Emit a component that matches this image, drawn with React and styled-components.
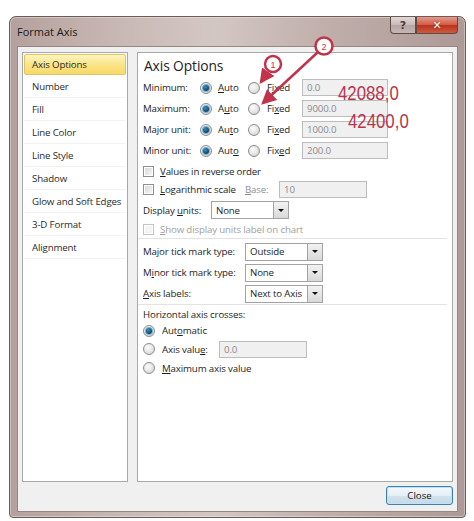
import React from "react";
import styled, { createGlobalStyle } from "styled-components";

const GlobalStyle = createGlobalStyle`
  html, body {
    margin: 0;
    padding: 0;
    background: #fff;
  }
  body {
    font-family: "Open Sans", "Noto Sans", sans-serif;
    color: #1e1e1e;
  }
`;

const Page = styled.div`
  position: relative;
  width: 474px;
  height: 521px;
  padding: 16px 0 0 9px;
  box-sizing: border-box;
`;

const Window = styled.div`
  width: 457px;
  height: 502px;
  box-sizing: border-box;
  border: 1px solid #6c5c59;
  border-radius: 7px 7px 4px 4px;
  background: linear-gradient(
    90deg,
    #b4a19d 0%,
    #c9b9b5 25%,
    #d3c7c4 45%,
    #c0aeaa 70%,
    #ad9a96 100%
  );
  box-shadow: inset 0 0 0 1px rgba(255, 255, 255, 0.35);
  padding: 0 7px 5px 7px;
  display: flex;
  flex-direction: column;
`;

const TitleBar = styled.div`
  height: 29px;
  display: flex;
  align-items: flex-start;
  justify-content: space-between;
`;

const Title = styled.div`
  font-size: 11px;
  color: #1a1a1a;
  padding-top: 7px;
`;

const Caption = styled.div`
  display: flex;
`;

const CapButton = styled.div`
  height: 17px;
  width: ${(p) => p.w}px;
  box-sizing: border-box;
  border: 1px solid #5e4a47;
  border-top: none;
  display: flex;
  align-items: center;
  justify-content: center;
  font-family: "DejaVu Sans", sans-serif;
  font-weight: bold;
  font-size: 11px;
  color: ${(p) => (p.red ? "#fff" : "#4a3c3a")};
  background: ${(p) =>
    p.red
      ? "linear-gradient(#e49a88, #d05a45 50%, #b9321e 51%, #cf5a3c)"
      : "linear-gradient(#e3d9d7, #c8b9b6 50%, #b6a4a1 51%, #c6b7b4)"};
  border-radius: ${(p) => (p.red ? "0 0 4px 0" : "0 0 0 4px")};
  text-shadow: ${(p) => (p.red ? "0 0 2px #7a1a10" : "none")};
`;

const Client = styled.div`
  flex: 1;
  background: #f0f0f0;
  border: 1px solid #988683;
  padding: 5px 4px 6px 4px;
  display: flex;
  flex-direction: column;
`;

const Body = styled.div`
  flex: 1;
  display: flex;
  gap: 9px;
`;

const Nav = styled.div`
  width: 106px;
  box-sizing: border-box;
  border: 1px solid #a9a9a9;
  background: #fff;
  padding: 0 1px;
`;

const NavItem = styled.div`
  box-sizing: border-box;
  display: flex;
  align-items: center;
  padding-left: 7px;
  font-size: 9.7px;
  letter-spacing: -0.15px;
  white-space: nowrap;
  color: #2a2a2a;
  border: 1px solid ${(p) => (p.active ? "#e3c263" : "transparent")};
  border-bottom-color: ${(p) => (p.active ? "#e3c263" : "#f1f1f1")};
  border-radius: ${(p) => (p.active ? "2px" : "0")};
  background: ${(p) =>
    p.active ? "linear-gradient(#fdf5c2, #fbe588 50%, #f8d968)" : "#fff"};
  margin-top: ${(p) => (p.active ? "1px" : "0")};
  height: ${(p) => (p.active ? "21px" : "23px")};
`;

const Content = styled.div`
  flex: 1;
  box-sizing: border-box;
  border: 1px solid #a9a9a9;
  background: #fff;
  padding: 2px 0 0 5px;
  display: flex;
  flex-direction: column;
  font-size: 9.7px;
  letter-spacing: -0.15px;
`;

const Heading = styled.div`
  font-size: 13.8px;
  letter-spacing: -0.1px;
  height: 22px;
  line-height: 22px;
  color: #222;
  padding-left: 1px;
`;

const Row = styled.div`
  display: flex;
  align-items: center;
  white-space: nowrap;
  height: ${(p) => p.h || 21}px;
  margin-top: ${(p) => p.mt || 0}px;
  color: ${(p) => (p.disabled ? "#a0a0a0" : "#1e1e1e")};
`;

const Label = styled.span`
  width: ${(p) => p.w}px;
  flex-shrink: 0;
  color: ${(p) => (p.disabled ? "#8f8f8f" : "inherit")};
`;

const U = styled.span`
  text-decoration: underline;
`;

const Option = styled.label`
  display: flex;
  align-items: center;
  gap: ${(p) => p.gap || 6}px;
  width: ${(p) => (p.w ? `${p.w}px` : "auto")};
  flex-shrink: 0;
`;

const Radio = styled.span`
  width: 12px;
  height: 12px;
  box-sizing: border-box;
  border-radius: 50%;
  border: 1px solid #8d8d8d;
  background: radial-gradient(circle at 40% 35%, #fdfdfd, #d8d8d8 80%);
  display: flex;
  align-items: center;
  justify-content: center;
  flex-shrink: 0;
  &::after {
    content: "";
    display: ${(p) => (p.checked ? "block" : "none")};
    width: 6px;
    height: 6px;
    border-radius: 50%;
    background: radial-gradient(circle at 40% 35%, #3f8fbd, #0b3f60 70%);
    box-shadow: 0 0 0 1px #6fb2d8;
  }
`;

const Check = styled.span`
  width: 11px;
  height: 11px;
  box-sizing: border-box;
  border: 1px solid ${(p) => (p.disabled ? "#c4c4c4" : "#8e8e8e")};
  background: ${(p) =>
    p.disabled ? "#f4f4f4" : "linear-gradient(135deg, #d6d6d6, #f8f8f8)"};
  box-shadow: inset 0 0 0 1px #fff;
  flex-shrink: 0;
`;

const TextBox = styled.div`
  width: ${(p) => p.w}px;
  height: 17px;
  box-sizing: border-box;
  border: 1px solid #bdbdbd;
  background: #f0f0f0;
  color: #8c8c8c;
  padding-left: 4px;
  display: flex;
  align-items: center;
  flex-shrink: 0;
`;

const Select = styled.div`
  width: ${(p) => p.w}px;
  height: 18px;
  box-sizing: border-box;
  border: 1px solid #a3a3a3;
  background: #fff;
  display: flex;
  align-items: stretch;
  flex-shrink: 0;
`;

const SelectText = styled.span`
  flex: 1;
  display: flex;
  align-items: center;
  padding-left: 4px;
  white-space: nowrap;
  overflow: hidden;
`;

const DropButton = styled.span`
  width: 15px;
  box-sizing: border-box;
  border-left: 1px solid #a3a3a3;
  background: linear-gradient(#f2f2f2, #d9d9d9);
  display: flex;
  align-items: center;
  justify-content: center;
  &::after {
    content: "";
    border-left: 3px solid transparent;
    border-right: 3px solid transparent;
    border-top: 3px solid #111;
  }
`;

const Divider = styled.div`
  height: 1px;
  background: #e3e3e3;
  margin: ${(p) => p.m || "0 5px 2px -5px"};
`;

const Footer = styled.div`
  display: flex;
  justify-content: flex-end;
  margin-top: 4px;
`;

const CloseButton = styled.button`
  width: 67px;
  height: 19px;
  box-sizing: border-box;
  border: 1px solid #3c7fb1;
  border-radius: 3px;
  background: linear-gradient(#f4f9fc, #e5eef5 50%, #d3e3ee 51%, #c6d9e6);
  box-shadow: inset 0 0 0 1px #bfe2f5;
  font-family: "Open Sans", "Noto Sans", sans-serif;
  font-size: 9.7px;
  color: #1a1a1a;
  padding: 0;
`;

const Overlay = styled.svg`
  position: absolute;
  left: 0;
  top: 0;
  pointer-events: none;
`;

const Note = styled.div`
  position: absolute;
  left: ${(p) => p.x}px;
  top: ${(p) => p.y}px;
  font-family: "Liberation Sans", sans-serif;
  font-size: 21px;
  line-height: 1;
  color: #b8354d;
  transform: scaleX(0.8);
  transform-origin: left top;
  white-space: nowrap;
`;

const navItems = [
  "Axis Options",
  "Number",
  "Fill",
  "Line Color",
  "Line Style",
  "Shadow",
  "Glow and Soft Edges",
  "3-D Format",
  "Alignment",
];

const bounds = [
  { label: "Minimum:", auto: [0, "Auto"], fixed: [1, "Fixed"], value: "0.0" },
  { label: "Maximum:", auto: [1, "Auto"], fixed: [2, "Fixed"], value: "9000.0" },
  { label: "Major unit:", auto: [2, "Auto"], fixed: [2, "Fixed"], value: "1000.0" },
  { label: "Minor unit:", auto: [3, "Auto"], fixed: [3, "Fixed"], value: "200.0" },
];

const mnemonic = ([i, word]) => (
  <>
    {word.slice(0, i)}
    <U>{word[i]}</U>
    {word.slice(i + 1)}
  </>
);

const Annotations = () => (
  <Overlay width="474" height="521" viewBox="0 0 474 521">
    <defs>
      <marker
        id="head"
        markerWidth="6"
        markerHeight="6"
        refX="5"
        refY="3"
        orient="auto"
        markerUnits="strokeWidth"
      >
        <path d="M0,0 L6,3 L0,6 Z" fill="#c0334b" />
      </marker>
    </defs>
    <line x1="268" y1="72" x2="261" y2="82" stroke="#c0334b" strokeWidth="2.5" markerEnd="url(#head)" />
    <line x1="318" y1="52" x2="263" y2="103" stroke="#c0334b" strokeWidth="2.5" markerEnd="url(#head)" />
    <circle cx="273" cy="64" r="8" fill="#fff" stroke="#c0334b" strokeWidth="2.5" />
    <text x="273" y="67.5" textAnchor="middle" fontSize="9" fill="#c0334b" fontFamily="Liberation Sans, sans-serif">1</text>
    <circle cx="324" cy="46" r="8.5" fill="#fff" stroke="#c0334b" strokeWidth="2.5" />
    <text x="324" y="49.5" textAnchor="middle" fontSize="9" fill="#c0334b" fontFamily="Liberation Sans, sans-serif">2</text>
  </Overlay>
);

export default function App() {
  return (
    <Page>
      <GlobalStyle />
      <Window>
        <TitleBar>
          <Title>Format Axis</Title>
          <Caption>
            <CapButton w={26}>?</CapButton>
            <CapButton w={42} red>
              ✕
            </CapButton>
          </Caption>
        </TitleBar>
        <Client>
          <Body>
            <Nav>
              {navItems.map((it, i) => (
                <NavItem key={it} active={i === 0}>
                  {it}
                </NavItem>
              ))}
            </Nav>
            <Content>
              <Heading>Axis Options</Heading>
              {bounds.map((b) => (
                <Row key={b.label}>
                  <Label w={57}>{b.label}</Label>
                  <Option w={48}>
                    <Radio checked />
                    <span>{mnemonic(b.auto)}</span>
                  </Option>
                  <Option w={54} gap={7}>
                    <Radio />
                    <span>{mnemonic(b.fixed)}</span>
                  </Option>
                  <TextBox w={86}>{b.value}</TextBox>
                </Row>
              ))}
              <Row h={18} mt={1}>
                <Option gap={6}>
                  <Check />
                  <span>
                    <U>V</U>alues in reverse order
                  </span>
                </Option>
              </Row>
              <Row h={19}>
                <Option gap={6} w={102}>
                  <Check />
                  <span>
                    <U>L</U>ogarithmic scale
                  </span>
                </Option>
                <Label w={34} disabled>
                  <U>B</U>ase:
                </Label>
                <TextBox w={88}>10</TextBox>
              </Row>
              <Row h={22}>
                <Label w={68}>
                  Display <U>u</U>nits:
                </Label>
                <Select w={78}>
                  <SelectText>None</SelectText>
                  <DropButton />
                </Select>
              </Row>
              <Row h={17} disabled>
                <Option gap={6}>
                  <Check disabled />
                  <span>
                    <U>S</U>how display units label on chart
                  </span>
                </Option>
              </Row>
              <Divider />
              <Row>
                <Label w={102}>
                  Ma<U>j</U>or tick mark type:
                </Label>
                <Select w={78}>
                  <SelectText>Outside</SelectText>
                  <DropButton />
                </Select>
              </Row>
              <Row>
                <Label w={102}>
                  M<U>i</U>nor tick mark type:
                </Label>
                <Select w={78}>
                  <SelectText>None</SelectText>
                  <DropButton />
                </Select>
              </Row>
              <Row>
                <Label w={102}>
                  <U>A</U>xis labels:
                </Label>
                <Select w={78}>
                  <SelectText>Next to Axis</SelectText>
                  <DropButton />
                </Select>
              </Row>
              <Divider m="0 5px 1px -5px" />
              <Row h={16}>Horizontal axis crosses:</Row>
              <Row h={17}>
                <Option gap={7}>
                  <Radio checked />
                  <span>
                    Aut<U>o</U>matic
                  </span>
                </Option>
              </Row>
              <Row h={20}>
                <Option gap={7} w={76}>
                  <Radio />
                  <span>
                    Axis valu<U>e</U>:
                  </span>
                </Option>
                <TextBox w={88}>0.0</TextBox>
              </Row>
              <Row h={18}>
                <Option gap={7}>
                  <Radio />
                  <span>
                    <U>M</U>aximum axis value
                  </span>
                </Option>
              </Row>
            </Content>
          </Body>
          <Footer>
            <CloseButton>Close</CloseButton>
          </Footer>
        </Client>
      </Window>
      <Annotations />
      <Note x={338} y={82}>
        42088,0
      </Note>
      <Note x={348} y={110}>
        42400,0
      </Note>
    </Page>
  );
}
